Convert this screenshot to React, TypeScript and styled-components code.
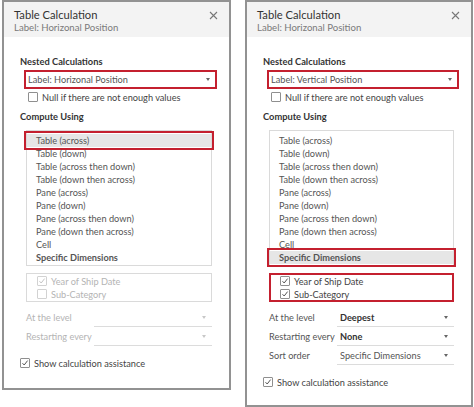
import React from 'react';
import styled, { createGlobalStyle } from 'styled-components';

const GlobalStyle = createGlobalStyle`
  body {
    margin: 0;
    background: #fff;
    font-family: Lato, 'Liberation Sans', sans-serif;
  }
`;

const Page = styled.div`
  display: flex;
  align-items: flex-start;
  gap: 14px;
  padding-left: 2px;
  width: 474px;
  height: 407px;
  overflow: hidden;
  box-sizing: border-box;
`;

const Panel = styled.div<{ $height: number; $width: number }>`
  box-sizing: border-box;
  width: ${(p) => p.$width}px;
  height: ${(p) => p.$height}px;
  flex: none;
  border: 2px solid #929292;
  background: #fff;
  display: flex;
  flex-direction: column;
`;

const Header = styled.div`
  background: #f3f3f3;
  padding: 6px 10px 3px 10px;
  display: flex;
  justify-content: space-between;
  align-items: flex-start;
`;

const Title = styled.div`
  font-size: 11.2px;
  line-height: 14px;
  color: #333;
`;

const Subtitle = styled.div`
  font-size: 9.6px;
  line-height: 12px;
  color: #7a7a7a;
`;

const Close = styled.svg`
  margin-top: 3px;
  margin-right: 1px;
`;

const Body = styled.div`
  padding: 19px 12px 0 16px;
  display: flex;
  flex-direction: column;
`;

const SectionLabel = styled.div<{ $top?: number }>`
  font-size: 9.3px;
  line-height: 12px;
  font-weight: 700;
  color: #333;
  margin-top: ${(p) => p.$top ?? 0}px;
`;

const Select = styled.div<{ $marked?: boolean }>`
  box-sizing: border-box;
  margin: 2px 0 0 4px;
  height: 19px;
  border: ${(p) => (p.$marked ? '2px solid #c4202f' : '1px solid #d0d0d0')};
  display: flex;
  align-items: center;
  justify-content: space-between;
  padding: 0 5px 0 2px;
  font-size: 9.2px;
  color: #555;
`;

const Arrow = styled.span<{ $muted?: boolean }>`
  margin-left: auto;
  width: 0;
  height: 0;
  border-left: 2.5px solid transparent;
  border-right: 2.5px solid transparent;
  border-top: 3px solid ${(p) => (p.$muted ? '#c8c8c8' : '#666')};
`;

const CheckRow = styled.label<{ $indent?: number; $top?: number; $muted?: boolean }>`
  display: flex;
  align-items: center;
  gap: 4px;
  height: 12px;
  margin: ${(p) => p.$top ?? 0}px 0 0 ${(p) => p.$indent ?? 0}px;
  font-size: 9.2px;
  color: ${(p) => (p.$muted ? '#b4b4b4' : '#444')};
`;

const Box = styled.span<{ $muted?: boolean }>`
  box-sizing: border-box;
  width: 10px;
  height: 10px;
  border: 1px solid ${(p) => (p.$muted ? '#d2d2d2' : '#8f8f8f')};
  border-radius: 1px;
  display: flex;
  align-items: center;
  justify-content: center;
  background: #fff;
`;

const ListBox = styled.div`
  box-sizing: border-box;
  margin: 7px 5px 0 6px;
  border: 1px solid #dadada;
  padding: 3px 0 1px 0;
  display: flex;
  flex-direction: column;
`;

const ListItem = styled.div<{ $selected?: boolean; $marked?: boolean; $bold?: boolean }>`
  height: 13px;
  line-height: 13px;
  padding-left: 9px;
  font-size: 9.2px;
  color: #555;
  font-weight: ${(p) => (p.$bold ? 700 : 400)};
  background: ${(p) => (p.$selected ? '#e6e6e6' : 'transparent')};
  outline: ${(p) => (p.$marked ? '2px solid #c4202f' : 'none')};
  outline-offset: 1px;
`;

const DimBox = styled.div<{ $marked?: boolean }>`
  box-sizing: border-box;
  margin: 7px 5px 0 6px;
  border: ${(p) => (p.$marked ? '2px solid #c4202f' : '1px solid #dadada')};
  padding: ${(p) => (p.$marked ? '0' : '1px')} 0;
  display: flex;
  flex-direction: column;
  gap: 1px;
  padding-left: ${(p) => (p.$marked ? 9 : 10)}px;
`;

const Fields = styled.div`
  margin: 6px 5px 0 6px;
  display: flex;
  flex-direction: column;
`;

const FieldRow = styled.div`
  display: grid;
  grid-template-columns: 68px 1fr;
  align-items: center;
  height: 19px;
  font-size: 9.2px;
`;

const FieldName = styled.span<{ $muted?: boolean }>`
  color: ${(p) => (p.$muted ? '#b4b4b4' : '#555')};
  white-space: nowrap;
`;

const FieldValue = styled.div<{ $bold?: boolean }>`
  height: 17px;
  border-bottom: 1px solid #dcdcdc;
  display: flex;
  align-items: center;
  padding: 0 6px 0 3px;
  color: ${(p) => (p.$bold ? '#333' : '#555')};
  font-weight: ${(p) => (p.$bold ? 700 : 400)};
`;

const Check = ({ on, muted }: { on?: boolean; muted?: boolean }) => (
  <Box $muted={muted}>
    {on && (
      <svg width="8" height="8" viewBox="0 0 8 8">
        <path
          d="M1.5 4.2 L3.2 6 L6.6 1.6"
          fill="none"
          stroke={muted ? '#c4c4c4' : '#555'}
          strokeWidth="1"
        />
      </svg>
    )}
  </Box>
);

const computeOptions = [
  'Table (across)',
  'Table (down)',
  'Table (across then down)',
  'Table (down then across)',
  'Pane (across)',
  'Pane (down)',
  'Pane (across then down)',
  'Pane (down then across)',
  'Cell',
  'Specific Dimensions',
];

type CalcPanelProps = {
  width: number;
  height: number;
  nested: string;
  selected: string;
  specific: boolean;
};

const CalcPanel = (props: CalcPanelProps) => {
  const fields = props.specific
    ? [
        { name: 'At the level', value: 'Deepest', bold: true },
        { name: 'Restarting every', value: 'None', bold: true },
        { name: 'Sort order', value: 'Specific Dimensions', bold: false },
      ]
    : [
        { name: 'At the level', value: '', bold: false },
        { name: 'Restarting every', value: '', bold: false },
      ];
  return (
    <Panel $width={props.width} $height={props.height}>
      <Header>
        <div>
          <Title>Table Calculation</Title>
          <Subtitle>Label: Horizonal Position</Subtitle>
        </div>
        <Close width="9" height="9" viewBox="0 0 9 9">
          <path d="M1 1 L8 8 M8 1 L1 8" stroke="#777" strokeWidth="1.1" />
        </Close>
      </Header>
      <Body>
        <SectionLabel>Nested Calculations</SectionLabel>
        <Select $marked>
          {props.nested}
          <Arrow />
        </Select>
        <CheckRow $indent={8} $top={2}>
          <Check />
          Null if there are not enough values
        </CheckRow>
        <SectionLabel $top={8}>Compute Using</SectionLabel>
        <ListBox>
          {computeOptions.map((option) => (
            <ListItem
              key={option}
              $selected={option === props.selected}
              $marked={option === props.selected}
              $bold={option === 'Specific Dimensions'}
            >
              {option}
            </ListItem>
          ))}
        </ListBox>
        <DimBox $marked={props.specific}>
          <CheckRow $muted={!props.specific}>
            <Check on muted={!props.specific} />
            Year of Ship Date
          </CheckRow>
          <CheckRow $muted={!props.specific}>
            <Check on={props.specific} muted={!props.specific} />
            Sub-Category
          </CheckRow>
        </DimBox>
        <Fields>
          {fields.map((field) => (
            <FieldRow key={field.name}>
              <FieldName $muted={!props.specific}>{field.name}</FieldName>
              <FieldValue $bold={field.bold}>
                {field.value}
                <Arrow $muted={!props.specific} />
              </FieldValue>
            </FieldRow>
          ))}
        </Fields>
        <CheckRow $top={11}>
          <Check on />
          Show calculation assistance
        </CheckRow>
      </Body>
    </Panel>
  );
};

export default function App() {
  return (
    <>
      <GlobalStyle />
      <Page>
        <CalcPanel
          width={229}
          height={390}
          nested="Label: Horizonal Position"
          selected="Table (across)"
          specific={false}
        />
        <CalcPanel
          width={228}
          height={407}
          nested="Label: Vertical Position"
          selected="Specific Dimensions"
          specific
        />
      </Page>
    </>
  );
}
